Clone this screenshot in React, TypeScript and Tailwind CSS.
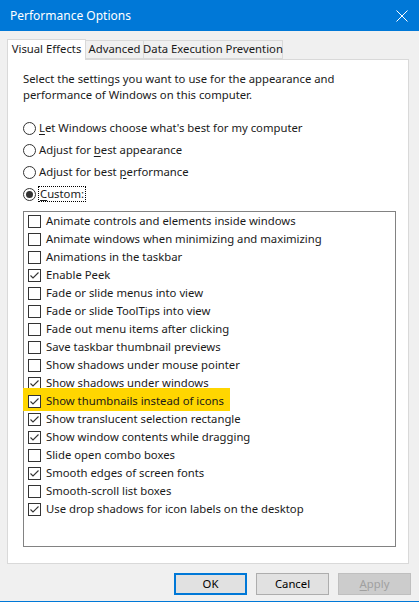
import React from "react";

const font = { fontFamily: '"Noto Sans", "Open Sans", sans-serif' };

type Item = { label: string; checked: boolean; highlight?: boolean };

const items: Item[] = [
  { label: "Animate controls and elements inside windows", checked: false },
  { label: "Animate windows when minimizing and maximizing", checked: false },
  { label: "Animations in the taskbar", checked: false },
  { label: "Enable Peek", checked: true },
  { label: "Fade or slide menus into view", checked: false },
  { label: "Fade or slide ToolTips into view", checked: false },
  { label: "Fade out menu items after clicking", checked: false },
  { label: "Save taskbar thumbnail previews", checked: false },
  { label: "Show shadows under mouse pointer", checked: false },
  { label: "Show shadows under windows", checked: true },
  { label: "Show thumbnails instead of icons", checked: true, highlight: true },
  { label: "Show translucent selection rectangle", checked: true },
  { label: "Show window contents while dragging", checked: true },
  { label: "Slide open combo boxes", checked: false },
  { label: "Smooth edges of screen fonts", checked: true },
  { label: "Smooth-scroll list boxes", checked: false },
  { label: "Use drop shadows for icon labels on the desktop", checked: true },
];

function Checkbox({ checked }: { checked: boolean }) {
  return (
    <span className="relative flex h-[13px] w-[13px] shrink-0 items-center justify-center border border-[#333333] bg-white">
      {checked && (
        <svg width="11" height="11" viewBox="0 0 11 11" className="absolute left-0 top-0">
          <path d="M1.5 5.5 L4 8 L9.5 2.5" fill="none" stroke="#333333" strokeWidth="1.1" />
        </svg>
      )}
    </span>
  );
}

function Radio({ selected }: { selected?: boolean }) {
  return (
    <span className="flex h-[13px] w-[13px] shrink-0 items-center justify-center rounded-full border border-[#333333] bg-white">
      {selected && <span className="h-[7px] w-[7px] rounded-full bg-[#333333]" />}
    </span>
  );
}

function Button({ children, kind }: { children: React.ReactNode; kind?: "default" | "disabled" }) {
  const base = "flex h-[22px] w-[73px] items-center justify-center text-[11.3px]";
  if (kind === "default")
    return <div className={`${base} border-2 border-[#0078d7] bg-[#e1e1e1] text-black`}>{children}</div>;
  if (kind === "disabled")
    return <div className={`${base} border border-[#bfbfbf] bg-[#cccccc] text-[#a0a0a0]`}>{children}</div>;
  return <div className={`${base} border border-[#adadad] bg-[#e1e1e1] text-black`}>{children}</div>;
}

export default function App() {
  return (
    <div className="flex h-[602px] w-[419px] flex-col overflow-hidden border-b border-[#0078d7] bg-[#f0f0f0] text-[#1a1a1a]" style={font}>
      {/* title bar */}
      <div className="flex h-[31px] shrink-0 items-center justify-between bg-[#0078d7] pl-[10px] pr-[11px] text-white">
        <span className="text-[12px]">Performance Options</span>
        <svg width="12" height="12" viewBox="0 0 12 12">
          <path d="M0.5 0.5 L11.5 11.5 M11.5 0.5 L0.5 11.5" stroke="white" strokeWidth="1" />
        </svg>
      </div>

      {/* tabs */}
      <div className="ml-[7px] mt-[7px] flex h-[21px] items-end whitespace-nowrap text-[11.3px]">
        <div className="relative z-10 -mb-px flex h-[21px] w-[79px] items-center justify-center border border-b-0 border-[#d9d9d9] bg-white pb-[2px]">
          Visual Effects
        </div>
        <div className="flex h-[19px] w-[58px] items-center justify-center border border-l-0 border-[#d9d9d9] bg-[#f0f0f0]">
          Advanced
        </div>
        <div className="flex h-[19px] w-[139px] items-center justify-center border border-l-0 border-[#d9d9d9] bg-[#f0f0f0]">
          Data Execution Prevention
        </div>
      </div>

      {/* panel */}
      <div className="ml-[7px] flex h-[505px] w-[402px] flex-col border border-[#d9d9d9] bg-white pl-[15px] pr-[12px] pt-[11px] text-[11.3px]">
        <p className="leading-[16px]">
          Select the settings you want to use for the appearance and
          <br />
          performance of Windows on this computer.
        </p>

        <div className="mt-[14px] flex flex-col">
          <div className="flex h-[22px] items-center gap-[3px]">
            <Radio />
            <span>
              <span className="underline underline-offset-2">L</span>et Windows choose what's best for my computer
            </span>
          </div>
          <div className="flex h-[22px] items-center gap-[3px]">
            <Radio />
            <span>
              Adjust for <span className="underline underline-offset-2">b</span>est appearance
            </span>
          </div>
          <div className="flex h-[22px] items-center gap-[3px]">
            <Radio />
            <span>
              Adjust for best <span className="underline underline-offset-2">p</span>erformance
            </span>
          </div>
          <div className="flex h-[22px] items-center gap-[2px]">
            <Radio selected />
            <span className="border border-dotted border-black px-px leading-[14px]">
              <span className="underline underline-offset-2">C</span>ustom:
            </span>
          </div>
        </div>

        <div className="mt-[6px] h-[336px] border border-[#828282]">
          {items.map((it) => (
            <div key={it.label} className="relative flex h-[18px] items-center gap-[5px] pl-[4px]">
              {it.highlight && <div className="absolute -left-px top-[-4px] h-[23px] w-[207px] bg-[#ffd600]" />}
              <span className="relative flex items-center gap-[5px]">
                <Checkbox checked={it.checked} />
                <span className="whitespace-nowrap">{it.label}</span>
              </span>
            </div>
          ))}
        </div>
      </div>

      {/* buttons */}
      <div className="mt-[9px] flex justify-end gap-[9px] pr-[8px]">
        <Button kind="default">OK</Button>
        <Button>Cancel</Button>
        <Button kind="disabled">
          <span>
            <span className="underline underline-offset-2">A</span>pply
          </span>
        </Button>
      </div>
    </div>
  );
}
